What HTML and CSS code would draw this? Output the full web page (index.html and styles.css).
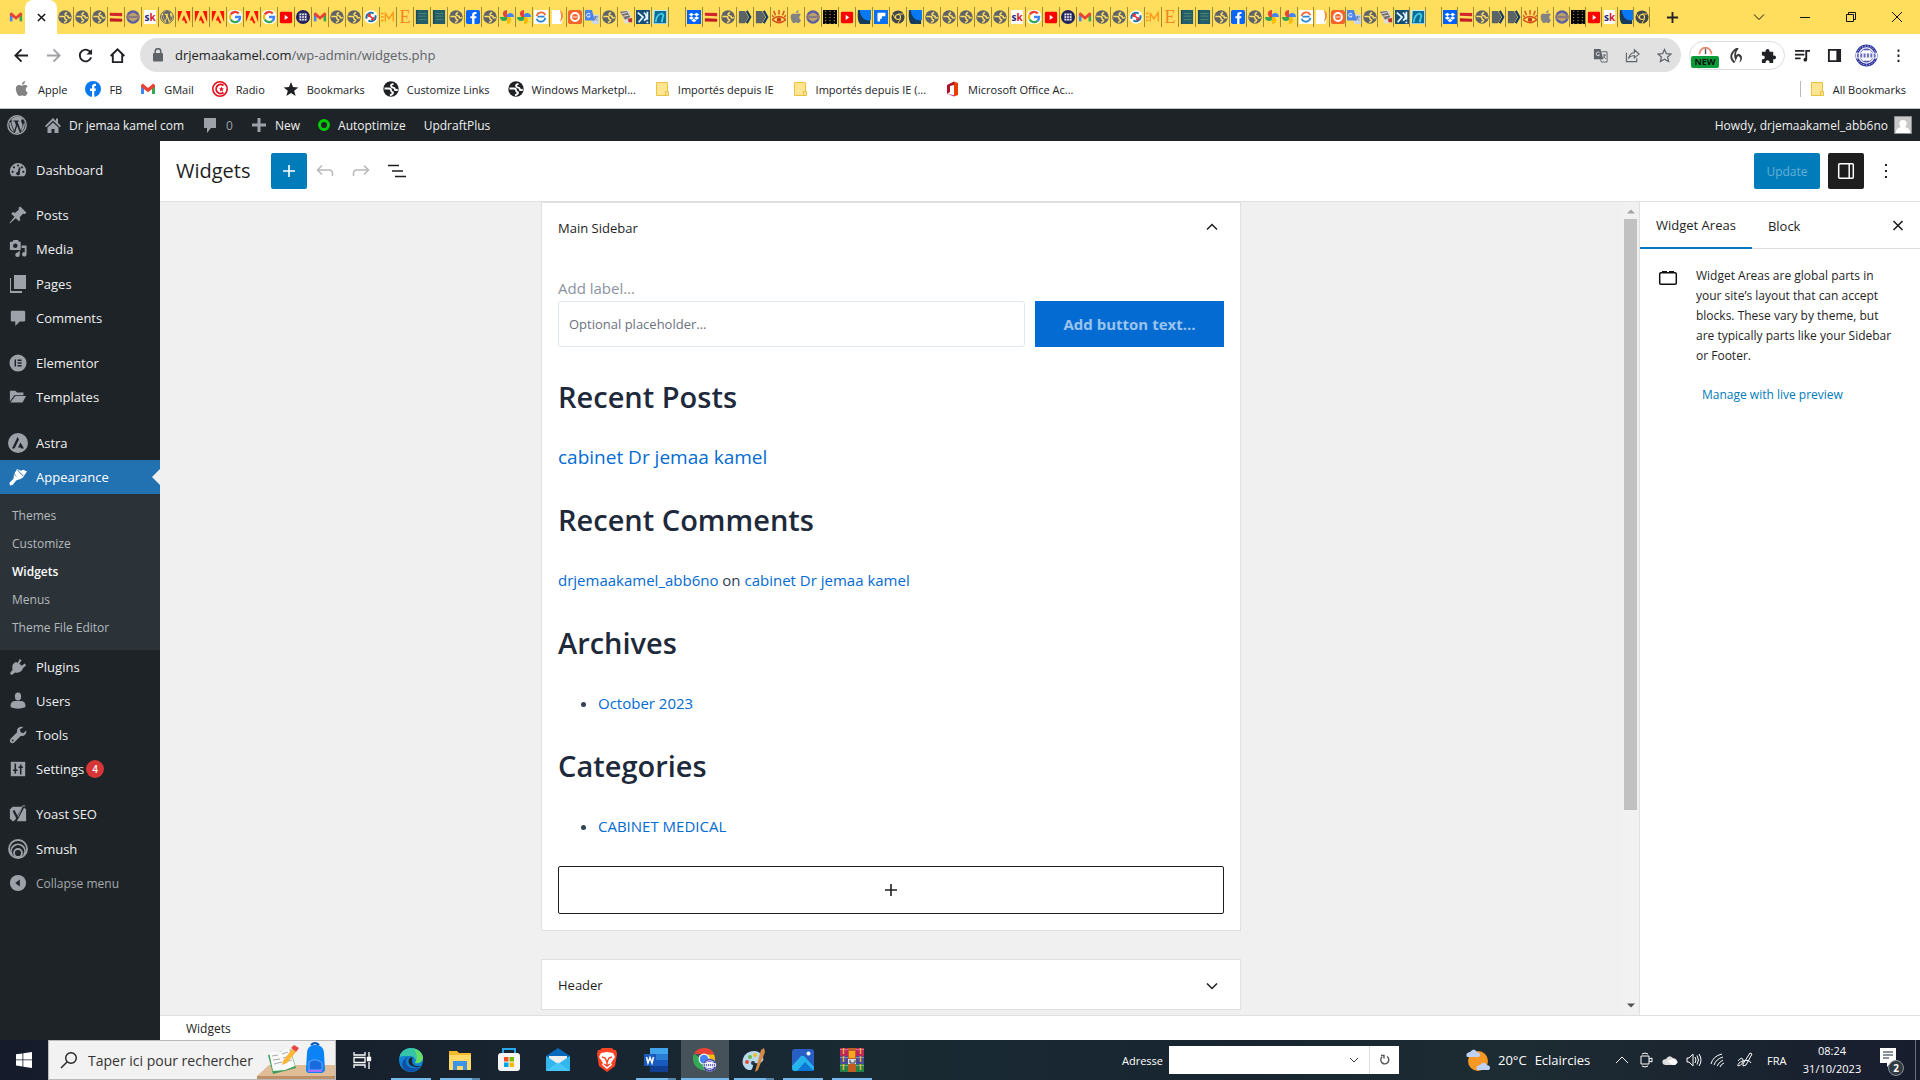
FILE: index.html
```html
<!DOCTYPE html>
<html lang="en">
<head>
<meta charset="utf-8">
<title>Widgets</title>
<link rel="stylesheet" href="styles.css">
</head>
<body>
<svg class="sprite" aria-hidden="true">
<symbol id="globe" viewBox="0 0 16 16"><circle cx="8" cy="8" r="7.700" fill="currentColor"/><path d="M1.500 7.500H6q2 0 2 1.800t2 2.200q0 1.800-3 2.800" fill="none" stroke="var(--hole)" stroke-width="1.800"/><path d="M10.500 2.800q-2.500.5-2.500 2t2 1.800 1.800 1.700 3 .3" fill="none" stroke="var(--hole)" stroke-width="1.800"/></symbol>
<symbol id="gmail" viewBox="0 0 16 16"><path d="M1 13V4h3v9z" fill="#4285f4"/><path d="M12 13V4h3v9z" fill="#34a853"/><path d="M1 4.200 2.800 2.600 8 7l5.200-4.400L15 4.200v1.600L8 11.200 1 5.800z" fill="#ea4335"/></symbol>
<symbol id="flag" viewBox="0 0 16 16"><path d="m1 3 14 .5V7L1 6.500z" fill="#d3252a"/><path d="m1 9.500 14 .5v3.500L1 13z" fill="#c11c21"/></symbol>
<symbol id="crest" viewBox="0 0 16 16"><circle cx="8" cy="8" r="7.600" fill="#5a5da0"/><circle cx="8" cy="8" r="5" fill="#e8c35e"/><path d="M0 8h16" stroke="#a98f74" stroke-width="4"/><path d="M1 8h14M5 4.500h6M5 11.500h6" stroke="#4a4f92" stroke-dasharray="1.500 .7"/></symbol>
<symbol id="wp" viewBox="0 0 20 20"><circle cx="10" cy="10" r="9.200" fill="none" stroke="currentColor" stroke-width="1.400"/><path d="M2.400 7C2 9 2.300 14 7 17.300L3.300 7zM3.500 5.500C7-.5 14 1 16 4.200c-2 0-2.300 2-1.300 3.500 1.200 2 1 3.300.2 5.300l-1 2.700L10.600 6.700l1.200-.3v-.9H6.400v.9l1.300.2 1.300 3.700-1.900 5.400L4.100 6.700l1-.2v-1zM17 6.600c2 4 .2 8.400-3.100 10.500l2.500-7.200c.5-1.300.7-2.300.6-3.300zM10.200 10.800l2.600 7c-1.600.6-3.400.6-4.900.2z" fill="currentColor"/></symbol>
<symbol id="adobe" viewBox="0 0 16 16"><path d="M1 1h5L1 14zM10 1h5v13zM8 6l4 9H9.500L8.300 12H5.500z" fill="#fa1405"/></symbol>
<symbol id="google" viewBox="0 0 16 16"><rect width="16" height="16" rx="6" fill="#fff"/><g fill="none" stroke-width="2.700"><path d="M12.300 4A5.800 5.800 0 0 0 3 5.200" stroke="#ea4335"/><path d="M3 5.200a5.800 5.800 0 0 0 0 5.600" stroke="#fbbc05"/><path d="M3 10.800a5.800 5.800 0 0 0 9 1.600" stroke="#34a853"/><path d="M12 12.400A5.800 5.800 0 0 0 13.800 8H8" stroke="#4285f4"/></g></symbol>
<symbol id="yt" viewBox="0 0 16 16"><rect x="1" y="2" width="14" height="13" rx="1.500" fill="#f00"/><path d="m6.500 5.500 4 3-4 3z" fill="#fff"/></symbol>
<symbol id="grid" viewBox="0 0 16 16"><circle cx="8" cy="8" r="8" fill="#23235f"/><path d="M4 4h8v8H4z" fill="#fff"/><path d="M6.500 4v8M9.500 4v8M4 6.500h8M4 9.500h8" stroke="#23235f"/></symbol>
<symbol id="sync" viewBox="0 0 16 16"><circle cx="8" cy="8" r="7.800" fill="#fff"/><path d="M3 10a5.300 5.300 0 0 1 8-6" fill="none" stroke="#1570a8" stroke-width="2.200"/><path d="M13 6a5.300 5.300 0 0 1-8 6" fill="none" stroke="#1570a8" stroke-width="2.200"/><path d="m5 5 6 6M8 5H5v3M8 11h3V8" fill="none" stroke="#e23c42" stroke-width="1.700"/></symbol>
<symbol id="em" viewBox="0 0 16 16"><path d="M0 4h3M0 8h3M0 12h3M5 13V4l4 6 5-7v10" fill="none" stroke="#ff9616" stroke-width="1.500"/></symbol>
<symbol id="book" viewBox="0 0 16 16"><path fill="#235d6a" d="M1 0h14v16H1z"/><path d="M4 4h9M4 7h9M4 11h9" stroke="#568a6f"/><path d="M2 0v16" stroke="#173f50"/></symbol>
<symbol id="fb" viewBox="0 0 16 16"><circle cx="8" cy="8" r="8" fill="#0878f0"/><path d="M7 16V10H5V7.500h2V6c0-2.500 1.500-3.500 4-3.100v2C9.600 4.800 9.300 5.200 9.300 6v1.500H11L10.600 10H9.300v6z" fill="#fff"/></symbol>
<symbol id="fbs" viewBox="0 0 16 16"><rect width="16" height="16" rx="2" fill="#0866ff"/><path d="M7 16V9.500H5V7h2V5.500C7 3 8.500 2 12 2.400v2.200C10 4.500 9.700 4.900 9.700 6v1H12l-.4 2.500H9.700V16z" fill="#fff"/></symbol>
<symbol id="pin" viewBox="0 0 16 16"><path d="M8 8V0C3 0 2 5 5 8z" fill="#ea4335"/><path d="M8 8h8c0-5-5-6-8-3z" fill="#4285f4"/><path d="M8 8v8c5 0 6-5 3-8z" fill="#fbbc05"/><path d="M8 8H0c0 5 5 6 8 3z" fill="#34a853"/></symbol>
<symbol id="sync2" viewBox="0 0 16 16"><path fill="#fff" d="M0 0h16v16H0z"/><path d="M3 7c1-5 8-6 10-1" fill="none" stroke="#f26a36" stroke-width="2"/><path d="M13 9c-1 5-8 6-10 1M4 7.500h8" fill="none" stroke="#2788cf" stroke-width="2"/></symbol>
<symbol id="paper" viewBox="0 0 16 16"><path d="M1 0h9l4 6-2 10H1z" fill="#fff"/><path d="M10 0c5 3 5 10 0 14 2-5 2-9 0-14z" fill="#f28a2e"/></symbol>
<symbol id="orange" viewBox="0 0 16 16"><rect width="16" height="16" rx="3" fill="#f2652b"/><circle cx="8" cy="8" r="4.500" fill="none" stroke="#fff" stroke-width="2.200"/><path d="M5 8h6" stroke="#fff"/></symbol>
<symbol id="trans" viewBox="0 0 16 16"><path fill="#c9d6ea" d="M6 5h10v11H9z"/><path fill="#4a83ea" d="M0 0h8l3 12H0z"/><path d="M6 5a2.200 2.200 0 1 0 0 2H4" fill="none" stroke="#fff"/><path d="M10 8h5M12 7c0 3-1 4-2 5m1-3 3 3" fill="none" stroke="#54749f"/></symbol>
<symbol id="photo" viewBox="0 0 16 16"><path fill="#ddd" d="m2 2 9-2 5 13-9 3z"/><path fill="#77706c" d="m1 2 8-1 4 7-6 3z"/><path d="m3 4 6-1M5 7l6-1" stroke="#eee"/><path fill="#bd342b" d="m10 10 5-1v5h-4z"/></symbol>
<symbol id="yahoo" viewBox="0 0 16 16"><path fill="#164e78" d="M0 0h16v16H0z"/><path d="m2 3 6 5-5 6M9 3c4 3 4 7 0 9M13 2v9m0 2v2" fill="none" stroke="#e4f7ff" stroke-width="2"/></symbol>
<symbol id="teal" viewBox="0 0 16 16"><path fill="#bcecff" d="M0 0h16v16H0z"/><path fill="#0d6b96" d="M2 1h13v14H1z"/><path d="M3 14q1-9 7-10 3 2 1 5l-1 5" fill="none" stroke="#42d2eb" stroke-width="2"/></symbol>
<symbol id="dropbox" viewBox="0 0 16 16"><path fill="#0061fe" d="M0 0h16v16H0z"/><path d="m5 3 3 2-3 2-3-2zm6 0 3 2-3 2-3-2zM5 7l3 2-3 2-3-2zm6 0 3 2-3 2-3-2zm-3 3 3 2-3 2-3-2z" fill="#fff"/></symbol>
<symbol id="dd" viewBox="0 0 16 16"><path fill="#5a6366" d="M1 1h7l4 7-4 7H1z"/><path d="m10 1 4 7-4 7" fill="none" stroke="#173d63" stroke-width="2.500"/></symbol>
<symbol id="eye" viewBox="0 0 16 16"><path d="M0 11q8-7 16 0-8 7-16 0M8 5V0M4 6 2 1M12 6l2-5M0 6l2 2M16 6l-2 2" fill="none" stroke="#d44e1d" stroke-width="1.600"/><circle cx="8" cy="11" r="2.500" fill="#c73d17"/></symbol>
<symbol id="apple" viewBox="0 0 16 16"><path d="M11 4c-1.500 0-2 .7-3 .7S6 4 5 4C2.500 4 1.500 6.500 2 9c.5 3 2 6 3.600 6 .9 0 1.300-.6 2.500-.6s1.500.6 2.500.6c1.400 0 2.600-2 3.100-3.600-2.500-1.200-2.400-4.800-.2-6C13 4.500 12 4 11 4zM8 3.800C7.900 2 9.300.4 11 0c.2 2-1.300 3.800-3 3.800z" fill="#838383"/></symbol>
<symbol id="film" viewBox="0 0 16 16"><path fill="#070707" d="M0 0h16v16H0z"/><path d="M3 1v15M8 1v15M13 1v15" stroke="#e7d58b" stroke-dasharray="1 2.500"/></symbol>
<symbol id="wave" viewBox="0 0 16 16"><path fill="#173b5d" d="M1 0h14v16H4Q0 15 1 0z"/><path d="M3 0h13v11C9 14 4 8 3 0z" fill="#0879f2"/></symbol>
<symbol id="flip" viewBox="0 0 16 16"><path fill="#0b70f0" d="M0 0h16v16H0z"/><path fill="#fff" d="M4 3h9v4H9v3H7v3H4z"/></symbol>
<symbol id="chromeg" viewBox="0 0 16 16"><circle cx="8" cy="8" r="7.500" fill="#41474a"/><circle cx="8" cy="8" r="3.500" fill="#ffde5e"/><circle cx="8" cy="8" r="2.300" fill="#41474a"/><path d="M8 4.500h7M5 10 1.500 4M11 10l-3.500 6" stroke="#ffde5e"/></symbol>
<symbol id="folder" viewBox="0 0 16 16"><path d="M2.500 1.500h11v9h1v4h-12z" fill="#ffe592" stroke="#e8c240"/><path d="M11.500 14v-3.500h2" fill="none" stroke="#e8c240"/></symbol>
<symbol id="plus" viewBox="0 0 24 24"><path d="M12 6v12M6 12h12" stroke="currentColor" stroke-width="1.600"/></symbol>
<symbol id="crestblue" viewBox="0 0 24 24"><circle cx="12" cy="12" r="11.500" fill="#fff"/><circle cx="12" cy="12" r="10" fill="none" stroke="#3037a0" stroke-width="3"/><circle cx="12" cy="12" r="10" fill="none" stroke="#fff" stroke-dasharray="1 2"/><circle cx="12" cy="12" r="7" fill="#fff" stroke="#3037a0" stroke-width=".7"/><path d="M1 9h22v6H1z" fill="#f5f5ff"/><path d="M2 12h20" stroke="#6a70bd" stroke-width="4" stroke-dasharray="2 1.500"/><path d="M9 18h6M9 6h6" stroke="#3037a0"/></symbol>
</svg>

<header class="browser">
  <div class="tabstrip">
    <button class="tab tab-first" aria-label="Gmail"><svg><use href="#gmail"/></svg></button>
    <button class="tab-active" aria-label="Close tab"><svg viewBox="0 0 10 10"><path d="m1 1 8 8M9 1 1 9" stroke="#111" stroke-width="1.600"/></svg></button>
    <div class="tabs" id="tabs"></div>
    <button class="newtab" aria-label="New tab"><svg viewBox="0 0 14 14"><path d="M7 1v12M1 7h12" stroke="#222" stroke-width="2"/></svg></button>
    <div class="winctl">
      <button aria-label="Search tabs"><svg viewBox="0 0 12 12"><path d="m1 3.500 5 5 5-5"/></svg></button>
      <button aria-label="Minimize"><svg viewBox="0 0 12 12"><path d="M1 6.500h10"/></svg></button>
      <button aria-label="Restore"><svg viewBox="0 0 12 12"><path d="M1.500 3.500h7v7h-7zM3.500 3.500v-2h7v7h-2"/></svg></button>
      <button aria-label="Close"><svg viewBox="0 0 12 12"><path d="m1 1 10 10M11 1 1 11"/></svg></button>
    </div>
  </div>

  <div class="toolbar">
    <button aria-label="Back"><svg viewBox="0 0 16 16"><path d="M15 8H2M8 1.500 1.500 8 8 14.500" fill="none" stroke="#202124" stroke-width="2"/></svg></button>
    <button aria-label="Forward"><svg viewBox="0 0 16 16"><path d="M1 8h13M8 1.500 14.500 8 8 14.500" fill="none" stroke="#a0a2a5" stroke-width="2"/></svg></button>
    <button aria-label="Reload"><svg viewBox="0 0 16 16"><path d="M13.800 5.500A6.200 6.200 0 1 0 14 10" fill="none" stroke="#202124" stroke-width="2"/><path d="M15 1v6H9z" fill="#202124"/></svg></button>
    <button aria-label="Home"><svg viewBox="0 0 16 16"><path d="M.7 8.500 8 1.500l7.300 7M3 7v8h10V7" fill="none" stroke="#202124" stroke-width="2"/></svg></button>
    <div class="omnibox">
      <svg class="lock" viewBox="0 0 12 14"><rect x="1" y="5" width="10" height="8.500" rx="1" fill="#5f6368"/><path d="M3.200 6V3.500a2.800 2.800 0 0 1 5.600 0V6" fill="none" stroke="#5f6368" stroke-width="1.500"/></svg>
      <span class="url">drjemaakamel.com<span>/wp-admin/widgets.php</span></span>
      <button aria-label="Translate"><svg viewBox="0 0 16 16"><path d="M1 1h7l3 11H1z" fill="#5f6368"/><path d="M9 4h6v11H9l-1-3" fill="none" stroke="#5f6368"/><path d="M7 5a2 2 0 1 0 0 2.500H5.500" stroke="#e1e1e1" fill="none"/><path d="M10.500 7.500H14M12.500 7c0 2-1 3-1.500 4m.5-2 2 2.500" fill="none" stroke="#5f6368"/></svg></button>
      <button aria-label="Share"><svg viewBox="0 0 16 16"><path d="M1.500 5v9.500h11V11M4 10.500C5 6.500 7 5 10 5V2l5 4.500-5 4V8c-3 0-4.500 1-6 2.500z" fill="none" stroke="#5f6368" stroke-width="1.200"/></svg></button>
      <button aria-label="Bookmark this page"><svg viewBox="0 0 16 16"><path d="m8 1.500 2 4.500 5 .5-3.700 3.200 1.100 4.800L8 12l-4.400 2.500 1.100-4.800L1 6.500 6 6z" fill="none" stroke="#5f6368" stroke-width="1.300"/></svg></button>
    </div>
    <div class="extensions">
      <button class="ext-new" aria-label="Speed"><svg viewBox="0 0 16 14"><path d="M1.500 12a6.500 7 0 0 1 13 0" fill="none" stroke="#e78a75" stroke-width="2"/><path d="M8 6v6" stroke="#555" stroke-width="1.500"/></svg><b>NEW</b></button>
      <button aria-label="Flame"><svg viewBox="0 0 16 16"><path d="M9.500 0C2 4 0 11 6 15.500M9.500 0C7 3 5.500 8 7.500 12" fill="none" stroke="#3b3b3b" stroke-width="2"/><path d="M7 15c-1-5 0-8 3-9 5 1 5 7 1 9.500 2-4 1-6-1-7-2 1-2.500 4-3 6.500z" fill="#3b3b3b"/></svg></button>
      <button aria-label="Extensions"><svg viewBox="0 0 16 16"><path d="M1 4h4c-1-4 5-4 4 0h4v4c4-1 4 5 0 4v4H9c1-4-5-4-4 0H1v-4c4 1 4-5 0-4z" fill="#202124"/></svg></button>
    </div>
    <button aria-label="Media"><svg viewBox="0 0 16 16"><path d="M0 3h10M0 7h10M0 11h6M12 12V3h4" fill="none" stroke="#202124" stroke-width="2"/><circle cx="11" cy="12.500" r="2" fill="#202124"/></svg></button>
    <button aria-label="Side panel"><svg viewBox="0 0 16 16"><path d="M2 2h12v12H2z" fill="none" stroke="#202124" stroke-width="2"/><path d="M10 2h4v12h-4z" fill="#202124"/></svg></button>
    <button class="profile" aria-label="Profile"><svg><use href="#crestblue"/></svg></button>
    <button aria-label="Menu"><svg viewBox="0 0 16 16"><path d="M7 1.500h2v2.500H7zM7 7h2v2.500H7zM7 12.500h2V15H7z" fill="#202124"/></svg></button>
  </div>

  <nav class="bookmarks">
    <a href="#"><svg><use href="#apple"/></svg>Apple</a>
    <a href="#"><svg><use href="#fb"/></svg>FB</a>
    <a href="#"><svg><use href="#gmail"/></svg>GMail</a>
    <a href="#"><svg viewBox="0 0 16 16"><circle cx="8" cy="8" r="7.200" fill="none" stroke="#e3101c" stroke-width="1.600"/><path d="M11.500 4.500a4.500 4.500 0 1 0 0 7" fill="none" stroke="#e3101c" stroke-width="1.800"/><path d="m9.500 5.500.7 1.700 1.800.2-1.300 1.200.3 1.900-1.500-1-1.600 1 .4-1.900L7 7.400l1.800-.2z" fill="#e3101c"/></svg>Radio</a>
    <a href="#"><svg viewBox="0 0 16 16"><path d="m8 1 2 5 5.300.4-4.100 3.400 1.400 5.200L8 12l-4.600 3 1.400-5.200L.7 6.400 6 6z" fill="#202124"/></svg>Bookmarks</a>
    <a href="#"><svg class="dark"><use href="#globe"/></svg>Customize Links</a>
    <a href="#"><svg class="dark"><use href="#globe"/></svg>Windows Marketpl...</a>
    <a href="#"><svg><use href="#folder"/></svg>Importés depuis IE</a>
    <a href="#"><svg><use href="#folder"/></svg>Importés depuis IE (...</a>
    <a href="#"><svg viewBox="0 0 16 16"><path d="M3 4 10 .5V4L6 5v6l-3 2z" fill="#b11226"/><path d="m10 .5 4 1.500v12l-4 1.500z" fill="#eb3c00"/><path d="m3 13 7 1v1.500z" fill="#d4449a"/></svg>Microsoft Office Ac...</a>
    <a class="all" href="#"><svg><use href="#folder"/></svg>All Bookmarks</a>
  </nav>
</header>

<nav class="adminbar">
  <a href="#" aria-label="WordPress"><svg class="i20"><use href="#wp"/></svg></a>
  <a class="light" href="#"><svg class="i16" viewBox="0 0 16 16"><path d="M8 1 0 9l1.200 1.200L8 3.800l6.800 6.400L16 9l-3-3V1.500h-2V4zM8 5.500 2.500 10.500V16h4v-4h3v4h4v-5.500z" fill="currentColor"/></svg><span>Dr jemaa kamel com</span></a>
  <a href="#"><svg class="i16" viewBox="0 0 16 16"><path d="M2 1h12v10H9l-4 5v-5H2z" fill="currentColor"/></svg><span>0</span></a>
  <a class="light" href="#"><svg class="i16" viewBox="0 0 16 16"><path d="M8 1v14M1 8h14" stroke="currentColor" stroke-width="3"/></svg><span>New</span></a>
  <a class="light auto" href="#"><i></i><span>Autoptimize</span></a>
  <a class="light" href="#"><span>UpdraftPlus</span></a>
  <a class="light howdy" href="#"><span>Howdy, drjemaakamel_abb6no</span><svg viewBox="0 0 18 18"><path fill="#c8c8c8" stroke="#8c8f94" d="M.5.500h17v17H.5z"/><path d="M9 4c5 0 4 6 2 7 4 1 5 3 5 6H2c0-3 1-5 5-6-2-1-3-7 2-7z" fill="#fff"/></svg></a>
</nav>

<div class="workspace">
  <nav class="adminmenu">
    <a href="#"><svg viewBox="0 0 20 20"><path d="M3 17A9 9 0 1 1 17 17z" fill="currentColor"/><path d="m12 7-1.500 8" stroke="#1d2327" stroke-width="2"/><g fill="#1d2327"><circle cx="4" cy="12" r="1.200"/><circle cx="5.500" cy="7" r="1.200"/><circle cx="10" cy="5" r="1.200"/><circle cx="14.500" cy="7" r="1.200"/><circle cx="16" cy="12" r="1.200"/><circle cx="10" cy="14" r="2"/></g></svg>Dashboard</a>
    <hr>
    <a href="#"><svg viewBox="0 0 20 20"><path d="m12.500.5 7 7-2 1.500-2-.5-3.500 4 .5 3-1.500 1.500-3.500-3.500L1 19.500l-.5-.5L6 12 2.500 8.500 4 7l3 .5 4-3.500-.5-2z" fill="currentColor"/></svg>Posts</a>
    <a href="#"><svg viewBox="0 0 20 20"><path d="M1 2h3l1-2h5l1 2h2v9H1z" fill="currentColor"/><circle cx="7" cy="6.500" r="2.500" fill="#1d2327"/><path d="M14 6h5.500v10a2.500 2.500 0 1 1-2-2.500V9H14zM12 12v4.500a2.500 2.500 0 1 1-2-2.500l1-2z" fill="currentColor"/></svg>Media</a>
    <a class="tall" href="#"><svg viewBox="0 0 20 20"><path d="M6 1h12v14H6z" fill="currentColor"/><path d="M3 4v13h11v2H2V4z" fill="currentColor"/></svg>Pages</a>
    <a href="#"><svg viewBox="0 0 20 20"><path d="M3 2h14l1 1v10l-1 1h-5l-5 5v-5H3l-1-1V3z" fill="currentColor"/></svg>Comments</a>
    <hr>
    <a href="#"><svg viewBox="0 0 20 20"><circle cx="10" cy="10" r="9.500" fill="currentColor"/><path d="M7 6v8M9.500 7H14M9.500 10H14M9.500 13H14" stroke="#1d2327" stroke-width="1.600"/></svg>Elementor</a>
    <a href="#"><svg viewBox="0 0 20 20"><path d="M1 3h6l2 2h7v3H6l-5 7z" fill="currentColor"/><path d="M7 9h12l-4 7H1.500z" fill="currentColor"/></svg>Templates</a>
    <hr>
    <a class="tall" href="#"><svg viewBox="0 0 20 20"><circle cx="10" cy="10" r="10" fill="currentColor"/><path d="M9.500 4 4 15.500h2.500L11 6.500zM12.500 9.500l-2.500 5h2.500l.5 1h3z" fill="#1d2327"/></svg>Astra</a>
    <a class="current" href="#"><svg viewBox="0 0 20 20"><path d="m9 1 4 2 3-1 4 2-5 7-2 1-2 1L6 6zM5.500 7 11 12.500 8 14l-4 5-3 .5-.5-3L5 12z" fill="currentColor"/><path d="m9 2 7 7" stroke="#2271b1"/></svg>Appearance</a>
    <div class="submenu">
      <a href="#">Themes</a><a href="#">Customize</a><a class="on" href="#">Widgets</a><a href="#">Menus</a><a href="#">Theme File Editor</a>
    </div>
    <a href="#"><svg viewBox="0 0 20 20"><path d="m12 1 2 1.500L11.500 6 14 8.500 17.500 6 19 8l-3.500 3.500C15 15 11 17 7 16l-4 3-2-2 3-4C3 9 4 6 8 4.500l1.500 1z" fill="currentColor"/></svg>Plugins</a>
    <a href="#"><svg viewBox="0 0 20 20"><ellipse cx="10" cy="5" rx="3.500" ry="4.500" fill="currentColor"/><path d="M7 10h6c4 0 6 3 5 7-5 2-11 2-16 0-1-4 1-7 5-7z" fill="currentColor"/></svg>Users</a>
    <a href="#"><svg viewBox="0 0 20 20"><path d="M16 1c-5-1-8 2-7 6l-7 7c-3 3 1 7 4 4l7-7c4 1 7-2 6-6l-3 3-3-1-1-3z" fill="currentColor"/><circle cx="4" cy="16" r="1" fill="#1d2327"/></svg>Tools</a>
    <a href="#"><svg viewBox="0 0 20 20"><path d="M2 2h16v16H2z" fill="currentColor"/><path d="M7 4v11M4.500 11.500h5M13 5v11M10.500 8h5" stroke="#1d2327" stroke-width="1.700"/></svg>Settings<b class="count">4</b></a>
    <hr>
    <a href="#"><svg viewBox="0 0 20 20"><path d="M4 2h12l3 3v13H4l-3-3V5z" fill="currentColor"/><path d="m5 6 4 8M17 0 9 15c-1 3-2 4-4 4" fill="none" stroke="#1d2327" stroke-width="2.400"/><path d="M18 1h-3L10 13" fill="none" stroke="currentColor"/></svg>Yoast SEO</a>
    <a class="tall" href="#"><svg viewBox="0 0 20 20"><g fill="none" stroke="currentColor" stroke-width="1.800"><circle cx="10" cy="10" r="9"/><path d="M4 16a7 7 0 1 1 12 0"/><circle cx="10" cy="14" r="4"/></g></svg>Smush</a>
    <a class="collapse" href="#"><svg viewBox="0 0 20 20"><circle cx="10" cy="10" r="9" fill="currentColor"/><path d="M12 6v8l-5-4z" fill="#1d2327"/></svg>Collapse menu</a>
  </nav>

  <div class="editor">
    <header class="edhead">
      <h1>Widgets</h1>
      <button class="add" aria-label="Add block"><svg><use href="#plus"/></svg></button>
      <button class="dim" aria-label="Undo"><svg viewBox="0 0 24 24"><path d="M9 6.500 4.500 11 9 15.500M5 11h11q3.500 0 3.500 3.500V17" fill="none" stroke="currentColor" stroke-width="1.500"/></svg></button>
      <button class="dim" aria-label="Redo"><svg viewBox="0 0 24 24"><path d="m15 6.500 4.500 4.500-4.500 4.500M19 11H8q-3.500 0-3.500 3.500V17" fill="none" stroke="currentColor" stroke-width="1.500"/></svg></button>
      <button aria-label="List view"><svg viewBox="0 0 24 24"><path d="M3 6.500h11M7 12h11M10 17.500h11" stroke="currentColor" stroke-width="1.600"/></svg></button>
      <button class="update">Update</button>
      <button class="panel" aria-label="Settings"><svg viewBox="0 0 24 24"><rect x="4.700" y="4.700" width="14.600" height="14.600" rx="1" fill="none" stroke="currentColor" stroke-width="1.500"/><path d="M15.200 5v14" stroke="currentColor" stroke-width="1.500"/></svg></button>
      <button aria-label="Options"><svg viewBox="0 0 24 24"><path d="M11 5h2v2h-2zM11 11h2v2h-2zM11 17h2v2h-2z" fill="currentColor"/></svg></button>
    </header>

    <div class="edbody">
      <main class="canvas">
        <div class="areas">
          <section class="area">
            <button class="areahead">Main Sidebar<svg viewBox="0 0 24 24"><path d="m7 13.500 5-5 5 5" fill="none" stroke="currentColor" stroke-width="1.500"/></svg></button>
            <div class="blocks">
              <form class="search">
                <label for="q">Add label…</label>
                <div class="row"><input id="q" type="text" placeholder="Optional placeholder…"><button type="button">Add button text…</button></div>
              </form>
              <h2>Recent Posts</h2>
              <p class="post"><a href="#">cabinet Dr jemaa kamel</a></p>
              <h2>Recent Comments</h2>
              <p><a href="#">drjemaakamel_abb6no</a> on <a href="#">cabinet Dr jemaa kamel</a></p>
              <h2>Archives</h2>
              <ul><li><a href="#">October 2023</a></li></ul>
              <h2>Categories</h2>
              <ul><li><a href="#">CABINET MEDICAL</a></li></ul>
              <button class="appender" aria-label="Add block"><svg><use href="#plus"/></svg></button>
            </div>
          </section>
          <section class="area">
            <button class="areahead">Header<svg viewBox="0 0 24 24"><path d="m7 10.500 5 5 5-5" fill="none" stroke="currentColor" stroke-width="1.500"/></svg></button>
          </section>
        </div>
        <div class="scrollbar"><svg viewBox="0 0 8 5"><path d="M0 4.500 4 .5l4 4z" fill="#a3a3a3"/></svg><i></i><svg viewBox="0 0 8 5"><path d="M0 .500h8L4 4.500z" fill="#505050"/></svg></div>
      </main>
      <aside class="inspector">
        <div class="itabs"><button class="on">Widget Areas</button><button>Block</button><button class="close" aria-label="Close settings"><svg viewBox="0 0 24 24"><path d="m7.500 7 9 9M16.500 7l-9 9" stroke="currentColor" stroke-width="1.600"/></svg></button></div>
        <div class="about">
          <svg viewBox="0 0 24 24"><rect x="3.700" y="6.700" width="16.600" height="11.600" rx="1.200" fill="none" stroke="#111" stroke-width="1.500"/><path d="M6 5h5v2H6zM13 5h5v2h-5z" fill="#111"/></svg>
          <div><p>Widget Areas are global parts in your site’s layout that can accept blocks. These vary by theme, but are typically parts like your Sidebar or Footer.</p><a href="#">Manage with live preview</a></div>
        </div>
      </aside>
    </div>
    <footer class="crumbs">Widgets</footer>
  </div>
</div>

<footer class="taskbar">
  <button class="start" aria-label="Start"><svg viewBox="0 0 16 16"><path d="M0 2.300 6.500 1.400v6.100H0zM7.300 1.300 16 0v7.500H7.300zM0 8.300h6.500v6.200L0 13.600zM7.300 8.300H16V16l-8.700-1.300z" fill="#fff"/></svg></button>
  <div class="tsearch">
    <svg class="mag" viewBox="0 0 18 18"><circle cx="11" cy="7" r="5.300" fill="none" stroke="#222" stroke-width="1.400"/><path d="m7 11-6 6" stroke="#222" stroke-width="1.400"/></svg>
    <input type="text" aria-label="Search" placeholder="Taper ici pour rechercher">
    <svg class="deco" viewBox="0 0 78 38"><path d="M12 24h66v11H0z" fill="#dfbd97"/><path d="M0 35h78v3H0z" fill="#bd9068"/><path d="m11 14 22-6 6 19-23 6z" fill="#3e9c54"/><path d="m12 11 11 0 9-4 6 18-10 4-12 1z" fill="#fafafa"/><path d="m15 15 6-1m-5 5 7-1m-6 5 8-2m0-8 6-2m-5 6 7-2m-5 6 7-2" stroke="#aaa"/><path d="m26 20 9-12 4 3-9 11-5 2z" fill="#ffb638"/><path d="m34 7 3-3 5 3-3 4z" fill="#e84842"/><path d="M54 4q4-4 8 0" stroke="#0754b8" stroke-width="2" fill="none"/><path d="M50 12c0-11 17-11 17 0l1 17q-1 3-4 3H52q-3 0-3-4z" fill="#0b82f5"/><path d="M52 21q7-5 13 1v7H52z" fill="#176bdf" stroke="#71a9ff"/><path d="M51 30h14" stroke="#a86cff" stroke-width="2"/></svg>
  </div>
  <div class="apps">
    <button aria-label="Task view"><svg viewBox="0 0 24 24" fill="none" stroke="#fff" stroke-width="1.300"><path d="M4 4v3h11V4M4 20v-3h11v3M4 9.500h11v5H4zM19 4v5M19 14v7"/><path d="M17.500 9.500h3v3h-3z" fill="#fff"/></svg></button>
    <button class="run" aria-label="Edge"><svg viewBox="0 0 24 24"><circle cx="12" cy="12" r="12" fill="#1182d2"/><path d="M.5 9C2 2 8 0 12 0c8 0 12 6 12 10 0 4-4 6-8 5 2-3 0-7-5-7C5 8 2 8 .500 9z" fill="#36c5a9"/><path d="M15 1c6 1 9 6 9 9s-4 6-8 5c3-4 2-10-1-14z" fill="#69dc68"/><path d="M7 13c0 6 6 9 14 6-5 7-16 6-18-2 0-5 4-8 8-8-3 1-4 2-4 4z" fill="#0f51a5"/><path d="M13 9c-5 1-5 9 3 10 4 1 6-1 6-1-3 1-9 0-9-5 0-2 1-2 0-4z" fill="#1b2431"/></svg></button>
    <button class="run more" aria-label="Explorer"><svg viewBox="0 0 24 24"><path d="M1 3h8l2 2h12v16H1z" fill="#f2b82e"/><path d="M1 7h22v15H1z" fill="#ffd867"/><path d="M5 13h14v9h-4v-4H9v4H5z" fill="#3d93e8"/></svg></button>
    <button aria-label="Store"><svg viewBox="0 0 24 24"><path d="M6 7V1h12v6" fill="none" stroke="#28a8ea" stroke-width="2"/><rect x="1" y="5" width="22" height="18" rx="3" fill="#f5f5f5"/><path d="M7 9h4.500v4.500H7z" fill="#f25022"/><path d="M12.500 9H17v4.500h-4.500z" fill="#7fba00"/><path d="M7 14.500h4.500V19H7z" fill="#00a4ef"/><path d="M12.500 14.500H17V19h-4.500z" fill="#ffb900"/></svg></button>
    <button aria-label="Mail"><svg viewBox="0 0 24 24"><path d="M0 8 12 0l12 8v15H0z" fill="#0868bb"/><path d="M3 8h18v12H3z" fill="#eee"/><path d="m0 8 12 8 12-8v15H0z" fill="#31b6ed"/><path d="m0 23 12-9 12 9z" fill="#55d0fb" opacity=".6"/></svg></button>
    <button aria-label="Brave"><svg viewBox="0 0 24 24"><path d="M7 0h10l2 2h2l1 4-2 12-8 6-8-6L2 6l1-4h2z" fill="#fb4425"/><path d="m12 4 6 1 2 4-4 6 1 2-5 4-5-4 1-2-4-6 2-4z" fill="#fff"/><path d="m7 9 3 1 2 4 2-4 3-1M12 14v3m-3-1 3 2 3-2" fill="none" stroke="#fb4425" stroke-width="1.500"/></svg></button>
    <button class="run more" aria-label="Word"><svg viewBox="0 0 24 24"><path d="M6 0h18v6H6z" fill="#41a5ee"/><path d="M6 6h18v6H6z" fill="#2b7cd3"/><path d="M6 12h18v6H6z" fill="#185abd"/><path d="M6 18h18v6H6z" fill="#103f91"/><path d="M0 6h12v12H0z" fill="#185abd"/><path d="m2.500 9 1.500 6L6 9.500 8 15l1.500-6" fill="none" stroke="#fff" stroke-width="1.500"/></svg></button>
    <button class="run cur" aria-label="Chrome"><svg viewBox="0 0 26 26"><path d="M1 6C6-2 20-2 23 7H12z" fill="#ea4335"/><path d="M23 7c3 9-3 17-11 17l6-12-6-5z" fill="#fbbc05"/><path d="M1 6c-4 9 3 18 11 18l5-9-5-1z" fill="#34a853"/><circle cx="12" cy="12" r="6" fill="#fff"/><circle cx="12" cy="12" r="4.700" fill="#4285f4"/><svg x="10" y="11" width="16" height="15"><use href="#crestblue"/></svg></svg></button>
    <button class="run more" aria-label="Paint"><svg viewBox="0 0 24 24"><path d="M1 11C3 3 15 0 20 7c4 7-2 9-7 8-3 0-1 5-4 7-5 1-10-5-8-11z" fill="#b9d9ed"/><circle cx="5" cy="14" r="2" fill="#e14a3c"/><circle cx="8" cy="9" r="2" fill="#6bb94a"/><circle cx="13" cy="7" r="2" fill="#f3bd2c"/><circle cx="11" cy="15" r="2" fill="#26384a"/><path d="m19 2 3-2 1 4-7 18-3 2 1-4z" fill="#d58b46"/></svg></button>
    <button class="run" aria-label="Photos"><svg viewBox="0 0 24 24"><rect x="1" y="1" width="22" height="22" rx="3" fill="#285fc4"/><path d="m1 18 9-10q2-1 4 1l9 10v1q0 3-3 3H4q-3 0-3-3z" fill="#27b4ed"/><path d="m6 23 8-9 9 9z" fill="#0c78d3"/><circle cx="17.500" cy="5.500" r="2" fill="#fff"/></svg></button>
    <button class="run" aria-label="WinRAR"><svg viewBox="0 0 24 24"><path d="M0 0h24v8H0z" fill="#bd2760"/><path d="M0 8h24v8H0z" fill="#494b9a"/><path d="M0 16h24v8H0z" fill="#248348"/><path d="M0 1.500h24M0 9.500h24M0 17.500h24" stroke="#fff" opacity=".35"/><path d="M3.500 0v24M20.500 0v24" stroke="#e7b52d" stroke-width="1.500" stroke-dasharray="6 2"/><path d="M8 0h8v24H8z" fill="#bf5d23"/><path d="M9 3h6v7H9z" fill="#f3a723"/><path d="M8 11h8v5H8z" fill="#d9dce0"/><path d="M10 12v3h5v-3" stroke="#333" fill="none"/></svg></button>
  </div>
  <div class="tray">
    <label class="addr" for="addr">Adresse</label>
    <div class="addrbox"><input id="addr" type="text"><button aria-label="Show history"><svg viewBox="0 0 12 12"><path d="m2 4 4 4 4-4" fill="none" stroke="#444"/></svg></button><button class="go" aria-label="Refresh"><svg viewBox="0 0 12 12"><path d="M8 2.500A4 4 0 1 1 3 3M2 1.500h3v3" fill="none" stroke="#555" stroke-width="1.400"/></svg></button></div>
    <button class="weather"><svg viewBox="0 0 24 24"><circle cx="12" cy="13" r="10" fill="#f79824"/><path d="M1 9q-2-4 3-5 4-5 7 0 5 1 2 5zM11 22q-2-4 3-5 4-5 7 0 5 1 2 5z" fill="#bfd1f5"/></svg><span>20°C</span><span>Eclaircies</span></button>
    <div class="icons">
      <svg viewBox="0 0 16 16"><path d="m2 11 6-6 6 6"/></svg>
      <svg viewBox="0 0 16 16"><path d="M3 4h8v8H3zM11 7l3-1v4l-3-1M4 2q3-2 6 0M4 14q3 2 6 0"/></svg>
      <svg viewBox="0 0 16 16"><path d="M3 13q-4-1-2-5 2-1 3-1 3-5 7-1 5 1 4 5-1 2-3 2z" fill="#ddd" stroke="none"/><path d="m5 9 6 4h2l3-3-5-3z" fill="#fff" stroke="none"/></svg>
      <svg viewBox="0 0 16 16"><path d="M1 6h2l4-4v12l-4-4H1zM9 5q2 3 0 6M11 3.500q3 4.500 0 9M13 2q4 6 0 12"/></svg>
      <svg viewBox="0 0 16 16"><path d="M1 12Q3 4 12 2M4 13Q6 7 13 5M7 14q2-4 6-6M10 15q1-3 4-4"/></svg>
      <svg class="pen" viewBox="0 0 16 16"><path d="M6 12 13 1l2 1-6 11-3 1zM1 9q4-5 5-1T1 14q-1-3 5-5t8 2"/></svg>
    </div>
    <span class="lang">FRA</span>
    <time>08:24<br>31/10/2023</time>
    <button class="notif" aria-label="Notifications"><svg viewBox="0 0 24 28"><path d="M1 2h16v15h-5l-4 4v-4H1z" fill="#fff"/><path d="M4 6h10M4 9h10M4 12h6" stroke="#1b2532"/></svg><b>2</b></button>
    <i class="peek"></i>
  </div>
</footer>
<script src="script.js"></script>
</body>
</html>
```
FILE: script.js
```js
// Favicons of the open tabs, left to right.
const wide = "globe globe globe flag crest sk wp adobe adobe adobe google adobe google yt grid gmail globe globe sync em etsy book book globe fbs globe pin pin sync2 paper orange trans globe photo yahoo teal none dropbox flag globe dd dd eye apple crest film yt wave flip chromeg wave globe globe globe globe globe sk google yt grid gmail globe globe sync em etsy book book globe fbs globe pin pin".split(" ");
const narrow = "sync2 paper orange trans globe photo yahoo teal none dropbox flag globe dd dd eye apple crest film yt sk wave chromeg".split(" ");
// Favicons that are set in type.
const typed = {
  sk: '<span class="fav-sk">s<em>k</em></span>',
  etsy: '<span class="fav-etsy">E</span>'
};
const strip = document.getElementById("tabs");
const tab = (name, cls) =>
  `<button class="${cls}" aria-label="${name}">${typed[name] || `<svg><use href="#${name}"/></svg>`}</button>`;
strip.innerHTML = wide.map(n => tab(n, "tab")).join("") + narrow.map(n => tab(n, "tab slim")).join("");
```
FILE: styles.css
```css
* { box-sizing: border-box; }
body { margin: 0; height: 100vh; display: flex; flex-direction: column; font-family: "Open Sans", "Noto Sans", sans-serif; font-size: 12px; color: #1e1e1e; background: #f0f0f0; overflow: hidden; }
button { border: 0; padding: 0; margin: 0; background: none; font: inherit; color: inherit; display: flex; align-items: center; justify-content: center; }
a { text-decoration: none; color: inherit; }
svg { display: block; flex: none; }
.sprite { position: absolute; width: 0; height: 0; }

/* Browser window */
.browser { flex: none; background: #fff; border-bottom: 1px solid #b9c3c3; }
.tabstrip { height: 34px; background: #ffde5e; display: flex; align-items: center; }
.tab { width: 17px; height: 20px; border-right: 1px solid #a28b37; color: #5f6368; --hole: #ffde5e; flex: none; }
.tab svg { width: 14px; height: 14px; }
.slim { width: 16px; }
.tab-first { width: 25px; border: 0; padding-left: 7px; }
.tab-active { width: 32px; height: 34px; background: #fff; border-radius: 8px 8px 0 0; }
.tab-active svg { width: 9px; height: 9px; }
.tabs { display: flex; }
.fav-sk { background: #fff; color: #1d2a86; font-size: 10px; font-weight: 700; line-height: 14px; }
.fav-sk em { font-style: normal; color: #d3202b; }
.fav-etsy { font: 18px/20px "Liberation Serif", serif; color: #f18423; }
.newtab { width: 44px; }
.newtab svg { width: 13px; height: 13px; }
.winctl { margin-left: auto; display: flex; }
.winctl button { width: 46px; height: 28px; }
.winctl svg { width: 12px; height: 12px; fill: none; stroke: #111; }

.toolbar { height: 42px; display: flex; align-items: center; padding: 0 6px 0 5px; }
.toolbar button { width: 32px; height: 32px; }
.toolbar svg { width: 15px; height: 15px; }
.omnibox { flex: 1; height: 34px; margin: 0 8px 0 7px; border-radius: 17px; background: #e1e1e1; display: flex; align-items: center; padding: 0 1px 0 12px; }
.toolbar .lock { width: 12px; height: 14px; }
.url { flex: 1; margin-left: 11px; font-size: 13px; color: #202124; }
.url span { color: #5f6368; }
.extensions { display: flex; height: 29px; align-items: center; border: 1px solid #dadce0; border-radius: 15px; margin-right: 1px; }
.toolbar .ext-new { width: 30px; flex-direction: column; }
.ext-new b { background: #0a9b3b; color: #111; font: 700 9px/12px "Open Sans", sans-serif; padding: 0 3px; border-radius: 2px; }
.toolbar .ext-new svg { height: 13px; }
.toolbar .profile svg { width: 23px; height: 23px; }

.bookmarks { height: 32px; display: flex; align-items: center; padding: 0 14px 6px; gap: 18px; font-size: 11px; color: #202124; white-space: nowrap; }
.bookmarks a { display: flex; align-items: center; gap: 8px; }
.bookmarks svg { width: 16px; height: 16px; }
.bookmarks .dark { color: #202124; --hole: #fff; }
.bookmarks .all { margin-left: auto; border-left: 1px solid #bbb; padding-left: 8px; }

/* WordPress admin bar */
.adminbar { flex: none; height: 32px; background: #1d2327; color: #9ca2a7; display: flex; align-items: center; padding: 0 8px 0 7px; }
.adminbar a { display: flex; align-items: center; gap: 8px; margin-right: 18px; white-space: nowrap; }
.adminbar .light span { color: #f0f0f1; }
.i20 { width: 20px; height: 20px; }
.i16 { width: 16px; height: 16px; }
.auto i { width: 12px; height: 12px; border: 3px solid #0c0; border-radius: 50%; }
.adminbar .howdy { margin: 0 0 0 auto; gap: 6px; }
.howdy svg { width: 18px; height: 18px; }

.workspace { flex: 1; min-height: 0; display: flex; }

/* Admin menu */
.adminmenu { width: 160px; flex: none; background: #1d2327; color: #f0f0f1; padding-top: 12px; font-size: 13px; }
.adminmenu > a { display: flex; align-items: center; gap: 8px; height: 34px; padding-left: 8px; position: relative; }
.adminmenu > .tall { height: 35px; }
.adminmenu svg { width: 20px; height: 18px; color: #9ca2a7; }
.adminmenu .tall svg { height: 20px; }
.adminmenu hr { border: 0; margin: 0; height: 11px; }
.adminmenu > .current { background: #2271b1; color: #fff; }
.adminmenu .current svg { color: #fff; }
.current::after { content: ""; position: absolute; right: 0; top: 9px; border: 8px solid transparent; border-left: 0; border-right-color: #f0f0f0; }
.submenu { background: #2c3338; color: #b4b9be; padding: 8px 0; font-size: 12px; }
.submenu a { display: block; height: 28px; line-height: 28px; padding-left: 12px; }
.submenu .on { color: #fff; font-weight: 600; }
.count { width: 18px; height: 18px; margin-left: -6px; border-radius: 50%; background: #d63638; color: #fff; font-size: 10px; line-height: 18px; text-align: center; font-weight: 600; }
.adminmenu > .collapse { color: #a7aaad; font-size: 12px; }

/* Editor */
.editor { flex: 1; min-width: 0; display: flex; flex-direction: column; }
.edhead { flex: none; height: 61px; background: #fff; border-bottom: 1px solid #e0e0e0; display: flex; align-items: center; padding: 0 16px; }
.edhead h1 { margin: 0 20px 0 0; font-size: 20px; font-weight: 500; line-height: 28px; }
.edhead button { width: 36px; height: 36px; border-radius: 2px; }
.edhead svg { width: 24px; height: 24px; }
.edhead .add, .edhead .update { background: #007cba; color: #fff; }
.edhead .dim { color: #b8b8b8; }
.edhead .update { margin-left: auto; width: 66px; color: #66b0d6; }
.edhead .panel { background: #1e1e1e; color: #fff; margin: 0 4px 0 8px; }
.edbody { flex: 1; min-height: 0; display: flex; }
.canvas { flex: 1; min-width: 0; display: flex; overflow: hidden; border-right: 1px solid #e0e0e0; }
.areas { flex: 1; display: flex; flex-direction: column; align-items: center; gap: 28px; }
.area { width: 100%; max-width: 700px; background: #fff; border: 1px solid #e0e0e0; flex: none; }
.areahead { width: 100%; height: 49px; padding: 0 16px; justify-content: space-between; font-size: 13px; }
.areahead svg { width: 24px; height: 24px; }
.blocks { padding: 23px 16px 16px; font-size: 15px; line-height: 26px; color: #334155; }
.blocks a { color: #046bd2; }
.search label { display: block; color: #8b93a1; }
.row { display: flex; gap: 10px; }
.row input { flex: 1; min-width: 0; height: 46px; border: 1px solid #e2e8f0; border-radius: 3px; padding: 0 10px; font: 13px "Open Sans", sans-serif; }
.row input::placeholder { color: #6b7280; opacity: 1; }
.row button { width: 189px; height: 46px; background: #046bd2; color: #9bc4ed; font-weight: 700; }
.blocks h2 { margin: 29px 0 26px; font-size: 29px; line-height: 42px; font-weight: 600; color: #1e293b; }
.blocks p, .blocks ul { margin: 0; }
.blocks ul { padding-left: 40px; }
.blocks .post { font-size: 19px; }
.appender { width: 100%; height: 48px; margin-top: 27px; border: 1px solid #1e1e1e; border-radius: 2px; }
.appender svg { width: 24px; height: 24px; color: #1e1e1e; }
.scrollbar { width: 17px; display: flex; flex-direction: column; align-items: center; padding: 7px 0; background: #f1f1f1; }
.scrollbar svg { width: 8px; height: 5px; }
.scrollbar i { width: 13px; height: 74%; margin: 5px 0 auto; background: #c1c1c1; }

.inspector { width: 280px; flex: none; background: #fff; }
.itabs { height: 47px; display: flex; border-bottom: 1px solid #ddd; font-size: 13px; }
.itabs button { padding: 0 16px; height: 47px; }
.itabs .on { border-bottom: 2px solid #007cba; }
.itabs .close { margin-left: auto; padding: 0 10px; }
.itabs svg { width: 24px; height: 24px; }
.about { padding: 17px 26px 0 16px; display: flex; gap: 16px; }
.about svg { width: 24px; height: 24px; }
.about p { margin: 0 0 20px; line-height: 20px; }
.about a { color: #007cba; margin-left: 6px; }
.crumbs { flex: none; height: 25px; border-top: 1px solid #e0e0e0; background: #fff; padding-left: 26px; line-height: 26px; }

/* Windows taskbar */
.taskbar { flex: none; height: 40px; background: linear-gradient(90deg, #161b2b, #192a33 45%, #182530 65%, #1d2c33 78%, #181d2e); color: #fff; display: flex; align-items: center; }
.start { width: 48px; height: 40px; }
.start svg { width: 16px; height: 16px; }
.tsearch { width: 288px; height: 40px; background: #f2f2f2; border: 1px solid #b9b9b9; display: flex; align-items: center; padding-left: 11px; }
.mag { width: 18px; height: 18px; }
.tsearch input { flex: 1; min-width: 0; margin-left: 10px; padding: 0; border: 0; background: none; font: 14px "Open Sans", sans-serif; }
.tsearch input::placeholder { color: #333; opacity: 1; }
.deco { width: 78px; height: 38px; }
.apps { display: flex; gap: 1px; margin-left: 2px; }
.apps button { width: 48px; height: 40px; position: relative; }
.apps button > svg { width: 24px; height: 26px; }
.apps .cur { background: #46525a; }
.run::after { content: ""; position: absolute; bottom: 0; left: 4px; right: 4px; height: 2px; background: #76b9ed; }
.cur::after { left: 0; right: 0; }
.more::after { border-right: 8px solid #5688ad; }
.tray { margin-left: auto; display: flex; align-items: center; }
.addr { font-size: 11px; margin-right: 6px; }
.addrbox { display: flex; width: 230px; height: 28px; background: #fff; margin-right: 67px; }
.addrbox input { flex: 1; min-width: 0; border: 0; background: none; }
.addrbox button { width: 30px; }
.addrbox .go { border-left: 1px solid #ddd; }
.addrbox svg { width: 12px; height: 12px; }
.weather { gap: 8px; font-size: 13px; width: 126px; justify-content: flex-start; margin-right: 22px; white-space: nowrap; }
.weather svg { width: 24px; height: 26px; }
.icons { display: flex; gap: 8px; }
.icons svg { width: 16px; height: 18px; fill: none; stroke: #fff; }
.icons .pen { margin-left: 3px; }
.lang { width: 22px; margin: 0 13px 0 14px; font-size: 11px; }
time { width: 60px; font-size: 11px; line-height: 18px; text-align: center; white-space: nowrap; margin-right: 16px; }
.notif { width: 26px; height: 40px; position: relative; margin-right: 11px; }
.notif svg { width: 24px; height: 28px; }
.notif b { position: absolute; right: 0; bottom: 4px; width: 16px; height: 16px; border-radius: 50%; background: #333b42; border: 1px solid #8c9297; font-size: 10px; line-height: 14px; text-align: center; }
.peek { width: 5px; height: 40px; border-left: 1px solid #67707a; }
```
